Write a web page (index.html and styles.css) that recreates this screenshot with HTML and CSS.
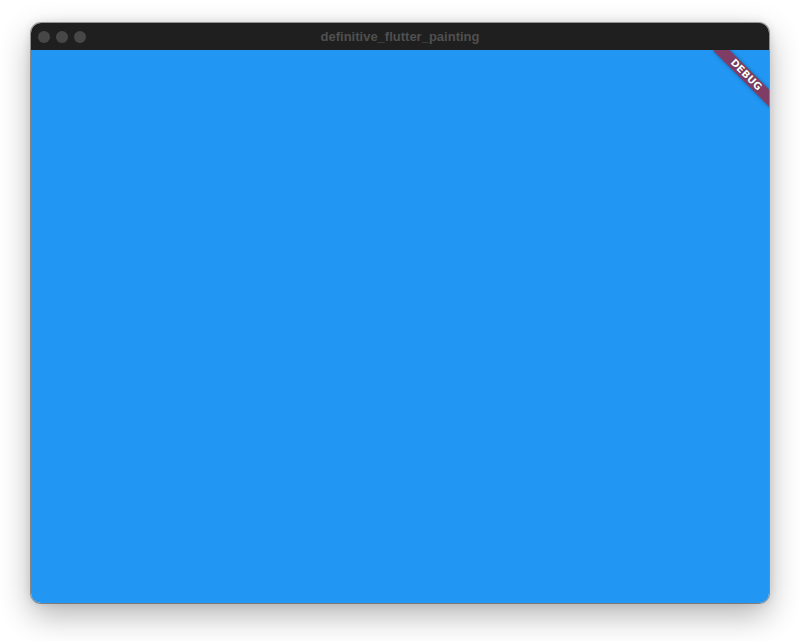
FILE: index.html
```html
<!DOCTYPE html>
<html>
<head>
<meta charset="utf-8">
<link rel="stylesheet" href="styles.css">
</head>
<body>
<div class="window">
  <div class="titlebar">
    <div class="lights">
      <span class="light"></span>
      <span class="light"></span>
      <span class="light"></span>
    </div>
    <div class="title">definitive_flutter_painting</div>
  </div>
  <div class="content">
    <div class="banner">DEBUG</div>
  </div>
</div>
</body>
</html>
```
FILE: styles.css
```css
html, body {
  margin: 0;
  padding: 0;
  background: #ffffff;
  width: 800px;
  height: 641px;
  overflow: hidden;
}
.window {
  margin: 23px 0 0 31px;
  width: 738px;
  height: 580px;
  border-radius: 10px;
  overflow: hidden;
  display: flex;
  flex-direction: column;
  box-shadow: 0 0 0 1px rgba(0,0,0,0.35), 0 12px 32px rgba(0,0,0,0.30), 0 0 10px rgba(0,0,0,0.12);
}
.titlebar {
  height: 27px;
  flex: none;
  background: #1f1f1f;
  position: relative;
  display: flex;
  align-items: center;
}
.lights {
  display: flex;
  gap: 6px;
  padding-left: 7px;
}
.light {
  width: 12px;
  height: 12px;
  border-radius: 50%;
  background: #474747;
}
.title {
  position: absolute;
  left: 0;
  right: 0;
  top: 0;
  bottom: 0;
  display: flex;
  align-items: center;
  justify-content: center;
  font-family: "Liberation Sans", Arial, sans-serif;
  font-weight: bold;
  font-size: 13px;
  color: #4f4f4f;
}
.content {
  flex: 1;
  background: #2196f3;
  position: relative;
  overflow: hidden;
}
.banner {
  position: absolute;
  top: 19px;
  right: -17px;
  width: 80px;
  height: 12px;
  background: rgba(160, 28, 50, 0.74);
  box-shadow: 0 0 4px rgba(0,0,0,0.35);
  transform: rotate(45deg);
  color: #ffffff;
  font-family: "DejaVu Sans", sans-serif;
  font-weight: 900;
  font-size: 10px;
  line-height: 12px;
  text-align: center;
  letter-spacing: 0.1px;
  text-shadow: 0 0 1px rgba(0,0,0,0.6);
}
```
